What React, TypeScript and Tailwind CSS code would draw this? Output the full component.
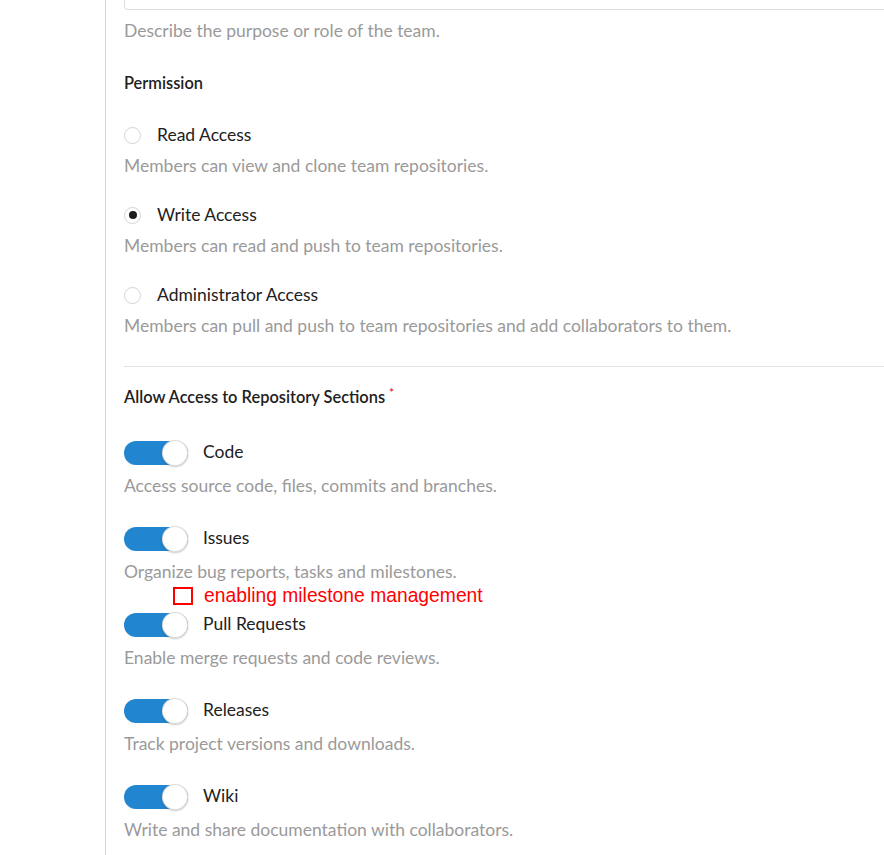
const permissions = [
  { label: "Read Access", desc: "Members can view and clone team repositories.", checked: false },
  { label: "Write Access", desc: "Members can read and push to team repositories.", checked: true },
  {
    label: "Administrator Access",
    desc: "Members can pull and push to team repositories and add collaborators to them.",
    checked: false,
  },
];

const sections = [
  { label: "Code", desc: "Access source code, files, commits and branches." },
  { label: "Issues", desc: "Organize bug reports, tasks and milestones.", note: "enabling milestone management" },
  { label: "Pull Requests", desc: "Enable merge requests and code reviews." },
  { label: "Releases", desc: "Track project versions and downloads." },
  { label: "Wiki", desc: "Write and share documentation with collaborators." },
];

function Radio({ checked }: { checked: boolean }) {
  return (
    <span className="flex h-[17px] w-[17px] shrink-0 items-center justify-center rounded-full border border-[#d4d4d5] bg-white">
      {checked && <span className="h-[8px] w-[8px] rounded-full bg-[#1b1c1d]" />}
    </span>
  );
}

function Toggle() {
  return (
    <span className="relative flex h-[24px] w-[64px] shrink-0 items-center rounded-full bg-[#2185d0]">
      {/* knob */}
      <span className="absolute right-0 top-[-1px] h-[26px] w-[26px] rounded-full bg-white shadow-[0_1px_2px_rgba(34,36,38,0.25),inset_0_0_0_1px_rgba(34,36,38,0.15)]" />
    </span>
  );
}

export default function App() {
  return (
    <div className="flex min-h-[855px] bg-white font-['Lato','Noto_Sans',sans-serif] text-[17.5px] leading-[20px] text-[#212121]">
      <div className="w-[106px] shrink-0 border-r border-[#d4d4d5]" />
      <div className="min-w-0 flex-1 overflow-hidden pl-[18px]">
        {/* bottom edge of the description input */}
        <div className="-mr-[10px] h-[10px] rounded-b-[4px] border-x border-b border-[#dedede]" />
        <p className="mt-[11px] text-[#9a9a9a]">Describe the purpose or role of the team.</p>

        <h3 className="mt-[32px] text-[16.4px] font-semibold text-[#212121]">Permission</h3>

        <div className="mt-[32px] flex flex-col gap-[29px]">
          {permissions.map((p) => (
            <div key={p.label}>
              <label className="flex items-center gap-[16px]">
                <Radio checked={p.checked} />
                <span>{p.label}</span>
              </label>
              <p className="mt-[11px] text-[#9a9a9a]">{p.desc}</p>
            </div>
          ))}
        </div>

        <hr className="mt-[30px] border-[#e2e2e2]" />

        <h3 className="mt-[20px] text-[16.4px] font-semibold text-[#212121]">
          Allow Access to Repository Sections
          <span className="relative top-[-6px] ml-[4px] text-[12px] text-[#db2828]">*</span>
        </h3>

        <div className="mt-[32px] flex flex-col gap-[31px]">
          {sections.map((s) => (
            <div key={s.label} className="relative">
              <label className="flex items-center gap-[15px]">
                <Toggle />
                <span className="relative top-[-1px]">{s.label}</span>
              </label>
              <p className="mt-[11px] text-[#9a9a9a]">{s.desc}</p>
              {s.note && (
                <div className="absolute left-[49px] top-[59px] flex items-center gap-[11px] font-['Liberation_Sans',Arial,sans-serif] text-[19.3px] leading-[20px] text-[#ff0000]">
                  <span className="h-[18px] w-[20px] border-2 border-[#ff0000]" />
                  <span>{s.note}</span>
                </div>
              )}
            </div>
          ))}
        </div>
      </div>
    </div>
  );
}
